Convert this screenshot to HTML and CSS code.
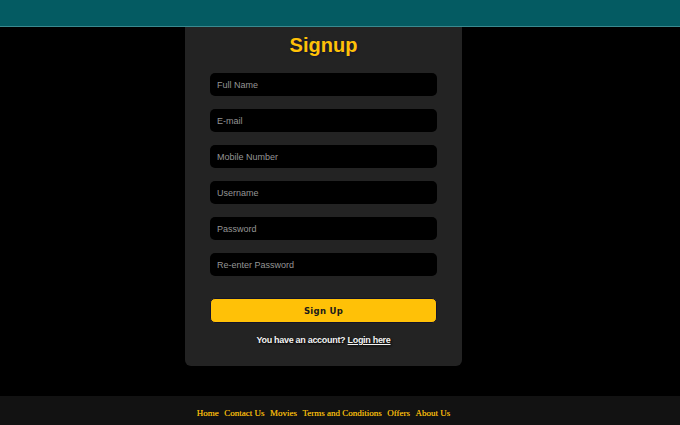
FILE: index.html
```html
<!DOCTYPE html>
<html lang="en">
<head>
<meta charset="utf-8">
<title>Signup</title>
<link rel="stylesheet" href="styles.css">
</head>
<body>
<header class="topbar"></header>
<main class="main">
  <form class="card">
    <h1 class="title">Signup</h1>
    <div class="fields">
      <input class="field" type="text" placeholder="Full Name">
      <input class="field" type="email" placeholder="E-mail">
      <input class="field" type="text" placeholder="Mobile Number">
      <input class="field" type="text" placeholder="Username">
      <input class="field" type="password" placeholder="Password">
      <input class="field" type="password" placeholder="Re-enter Password">
    </div>
    <button class="btn" type="button">Sign Up</button>
    <p class="note">You have an account? <a class="note-link" href="#">Login here</a></p>
  </form>
</main>
<footer class="footer">
  <nav class="footer-nav">
    <a href="#">Home</a>
    <a href="#">Contact Us</a>
    <a href="#">Movies</a>
    <a href="#">Terms and Conditions</a>
    <a href="#">Offers</a>
    <a href="#">About Us</a>
  </nav>
</footer>
</body>
</html>
```
FILE: styles.css
```css
* { box-sizing: border-box; }
html, body { margin: 0; padding: 0; }
body {
  background: #000;
  font-family: "Liberation Sans", Arial, sans-serif;
  min-height: 425px;
}
.topbar {
  height: 27px;
  background: #045b62;
  border-bottom: 1px solid #3a8a8f;
}
.main {
  width: 647px;
  display: flex;
  justify-content: center;
}
.card {
  width: 277px;
  background: #232323;
  border-radius: 0 0 6px 6px;
  padding: 7px 25px 20px;
  display: flex;
  flex-direction: column;
}
.title {
  margin: 0 0 16px;
  text-align: center;
  font-size: 20px;
  line-height: 23px;
  font-weight: 700;
  color: #ffc107;
  text-shadow: 1px 1px 2px #141430;
}
.fields {
  display: flex;
  flex-direction: column;
  gap: 13px;
}
.field {
  height: 23px;
  border: none;
  border-radius: 5px;
  background: #000;
  padding: 0 7px;
  font-family: "Liberation Sans", Arial, sans-serif;
  font-size: 9px;
  color: #ddd;
  outline: none;
}
.field::placeholder { color: #959595; }
.btn {
  margin-top: 22px;
  height: 25px;
  width: 100%;
  background: #ffc107;
  border: 1px solid #14142a;
  border-radius: 5px;
  font-family: "DejaVu Sans", sans-serif;
  font-weight: 700;
  font-size: 8.5px;
  letter-spacing: 0.3px;
  color: #1a1a1a;
  padding: 0;
}
.note {
  margin: 12px 0 0;
  text-align: center;
  font-size: 9px;
  line-height: 11px;
  font-weight: 700;
  letter-spacing: -0.3px;
  color: #f2f2f2;
  text-shadow: 1px 1px 2px #000;
}
.note-link {
  color: #f2f2f2;
  text-decoration: underline;
}
.footer {
  margin-top: 30px;
  background: #121212;
  padding: 12px 0 12px;
}
.footer-nav {
  width: 647px;
  display: flex;
  justify-content: center;
  gap: 5.5px;
  font-family: "Liberation Serif", "Times New Roman", serif;
  font-size: 9px;
  line-height: 11px;
}
.footer-nav a {
  color: #e8b00c;
  text-decoration: none;
  text-shadow: 0 0 0.4px #e8b00c;
}
```
